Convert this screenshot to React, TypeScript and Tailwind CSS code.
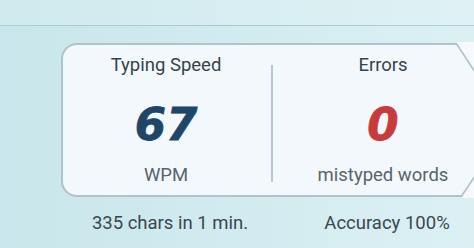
import React from "react";

export default function App() {
  return (
    <div
      className="relative w-[474px] h-[248px] overflow-hidden bg-gradient-to-r from-[#c8e6eb] to-[#dcf0f4]"
      style={{ fontFamily: "Roboto, 'Liberation Sans', sans-serif" }}
    >
      <div className="h-[26px] border-b border-[#a9cdd5] bg-gradient-to-r from-[#d0eaee] to-[#dff1f4]" />
      <div className="mt-[17px] ml-[61px] w-[440px] h-[154px] flex rounded-l-[16px] border-2 border-[#adc3ce] bg-[#f2f8fb]">
        <div className="w-[206px] shrink-0 flex flex-col items-center pt-[9px]">
          <div className="text-[18.5px] leading-[22px] text-[#37434b]">Typing Speed</div>
          <div className="mt-[26px] text-[45px] leading-[45px] font-bold italic text-[#1f4668] [-webkit-text-stroke:0.8px_#1f4668] font-['DejaVu_Sans',sans-serif]">67</div>
          <div className="mt-[17px] text-[18.5px] leading-[22px] text-[#59636a]">WPM</div>
        </div>
        <div className="shrink-0 ml-[2px] mt-[20px] w-[2px] h-[117px] bg-[#b6c8d6]" />
        <div className="w-[220px] shrink-0 flex flex-col items-center pt-[9px]">
          <div className="text-[18.5px] leading-[22px] text-[#37434b]">Errors</div>
          <div className="mt-[26px] text-[45px] leading-[45px] font-bold italic text-[#c93a3a] [-webkit-text-stroke:0.8px_#c93a3a] font-['DejaVu_Sans',sans-serif]">0</div>
          <div className="mt-[17px] text-[18.5px] leading-[22px] text-[#59636a]">mistyped words</div>
        </div>
      </div>
      <div className="mt-[15px] ml-[63px] flex text-[18.5px] leading-[22px] text-[#3a474f]">
        <div className="w-[214px] shrink-0 text-center">335 chars in 1 min.</div>
        <div className="w-[220px] shrink-0 text-center">Accuracy 100%</div>
      </div>
      <svg className="absolute left-0 top-0 pointer-events-none" width="474" height="248">
        <polygon points="455,42 476,42 476,72" fill="#f6fafc" />
        <polygon points="461,198 476,198 476,176" fill="#f6fafc" />
        <line x1="456" y1="43" x2="475" y2="72" stroke="#adc3ce" strokeWidth="1.6" />
        <line x1="461" y1="197" x2="475" y2="176" stroke="#adc3ce" strokeWidth="1.6" />
      </svg>
    </div>
  );
}
